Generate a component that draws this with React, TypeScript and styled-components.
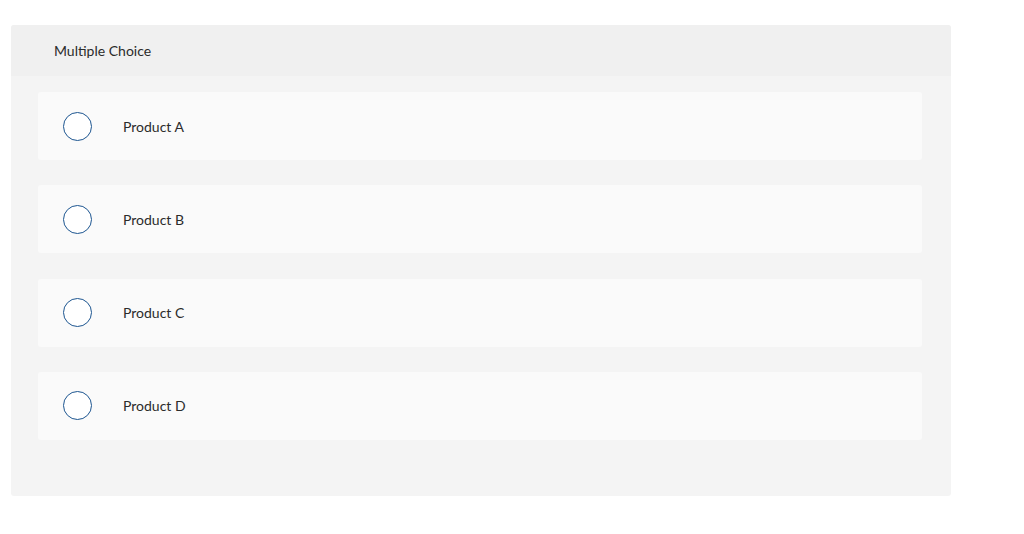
import React from "react";
import styled, { createGlobalStyle } from "styled-components";

const Global = createGlobalStyle`
  html, body { margin: 0; padding: 0; background: #ffffff; }
  body { font-family: "Lato", "Open Sans", "Liberation Sans", sans-serif; }
`;

const Page = styled.div`
  padding: 25px 0 0 11px;
`;

const Panel = styled.div`
  width: 940px;
  height: 471px;
  background: #f4f4f4;
  border-radius: 3px;
  overflow: hidden;
  display: flex;
  flex-direction: column;
`;

const Header = styled.div`
  height: 51px;
  background: #f0f0f0;
  display: flex;
  align-items: center;
  padding-left: 43px;
  font-size: 14px;
  color: #2b2b2b;
`;

const List = styled.div`
  display: flex;
  flex-direction: column;
  gap: 25.33px;
  padding: 16px 29px 0 27px;
`;

const Row = styled.label`
  height: 68px;
  background: #fafafa;
  border-radius: 3px;
  display: flex;
  align-items: center;
  padding-left: 25px;
  cursor: pointer;
`;

const Radio = styled.span`
  width: 27px;
  height: 27px;
  border-radius: 50%;
  border: 1.2px solid #1c5590;
  background: #ffffff;
  flex: none;
`;

const Label = styled.span`
  margin-left: 31px;
  font-size: 14px;
  color: #2b2b2b;
`;

const options = ["Product A", "Product B", "Product C", "Product D"];

export default function App() {
  return (
    <>
      <Global />
      <Page>
        <Panel>
          <Header>Multiple Choice</Header>
          <List>
            {options.map((o) => (
              <Row key={o}>
                <Radio />
                <Label>{o}</Label>
              </Row>
            ))}
          </List>
        </Panel>
      </Page>
    </>
  );
}
